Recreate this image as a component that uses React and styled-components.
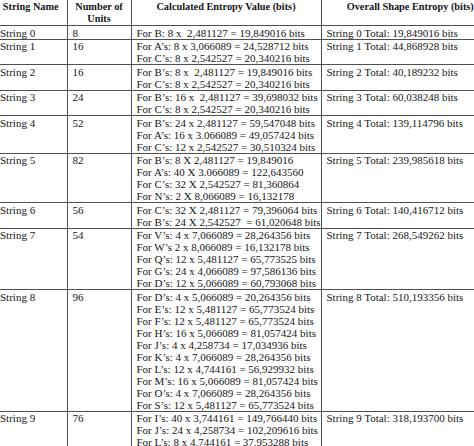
import React from 'react';
import styled, { createGlobalStyle } from 'styled-components';

//------------------------------------------------------------------------------
// DATA:
//------------------------------------------------------------------------------
const ROWS = [
  { name: 'String 0', units: '8', lines: ['For B: 8 x \u00a02,481127 = 19,849016 bits'], total: '19,849016' },
  {
    name: 'String 1',
    units: '16',
    lines: ['For A\u2019s: 8 x 3,066089 = 24,528712 bits', 'For C\u2019s: 8 x 2,542527 = 20,340216 bits'],
    total: '44,868928',
  },
  {
    name: 'String 2',
    units: '16',
    lines: ['For B\u2019s: 8 x \u00a02,481127 = 19,849016 bits', 'For C\u2019s: 8 x 2,542527 = 20,340216 bits'],
    total: '40,189232',
  },
  {
    name: 'String 3',
    units: '24',
    lines: ['For B\u2019s: 16 x \u00a02,481127 = 39,698032 bits', 'For C\u2019s: 8 x 2,542527 = 20,340216 bits'],
    total: '60,038248',
  },
  {
    name: 'String 4',
    units: '52',
    lines: [
      'For B\u2019s: 24 x 2,481127 = 59,547048 bits',
      'For A\u2019s: 16 x 3.066089 = 49,057424 bits',
      'For C\u2019s: 12 x 2,542527 = 30,510324 bits',
    ],
    total: '139,114796',
  },
  {
    name: 'String 5',
    units: '82',
    lines: [
      'For B\u2019s: 8 X 2,481127 = 19,849016',
      'For A\u2019s: 40 X 3.066089 = 122,643560',
      'For C\u2019s: 32 X 2,542527 = 81,360864',
      'For N\u2019s: 2 X 8,066089 = 16,132178',
    ],
    total: '239,985618',
  },
  {
    name: 'String 6',
    units: '56',
    lines: ['For C\u2019s: 32 X 2,481127 = 79,396064 bits', 'For B\u2019s: 24 X 2,542527 \u00a0= 61,020648 bits'],
    total: '140,416712',
  },
  {
    name: 'String 7',
    units: '54',
    lines: [
      'For V\u2019s: 4 x 7,066089 = 28,264356 bits',
      'For W\u2019s 2 x 8,066089 = 16,132178 bits',
      'For Q\u2019s: 12 x 5,481127 = 65,773525 bits',
      'For G\u2019s: 24 x 4,066089 = 97,586136 bits',
      'For D\u2019s: 12 x 5,066089 = 60,793068 bits',
    ],
    total: '268,549262',
  },
  {
    name: 'String 8',
    units: '96',
    lines: [
      'For D\u2019s: 4 x 5,066089 = 20,264356 bits',
      'For E\u2019s: 12 x 5,481127 = 65,773524 bits',
      'For F\u2019s: 12 x 5,481127 = 65,773524 bits',
      'For H\u2019s: 16 x 5,066089 = 81,057424 bits',
      'For J\u2019s: 4 x 4,258734 = 17,034936 bits',
      'For K\u2019s: 4 x 7,066089 = 28,264356 bits',
      'For L\u2019s: 12 x 4,744161 = 56,929932 bits',
      'For M\u2019s: 16 x 5,066089 = 81,057424 bits',
      'For O\u2019s: 4 x 7,066089 = 28,264356 bits',
      'For S\u2019s: 12 x 5,481127 = 65,773524 bits',
    ],
    total: '510,193356',
  },
  {
    name: 'String 9',
    units: '76',
    lines: [
      'For I\u2019s: 40 x 3,744161 = 149,766440 bits',
      'For J\u2019s: 24 x 4,258734 = 102,209616 bits',
      'For L\u2019s: 8 x 4,744161 = 37,953288 bits',
    ],
    total: '318,193700',
  },
];

//------------------------------------------------------------------------------
// STYLES:
//------------------------------------------------------------------------------
const GlobalStyle = createGlobalStyle`
  html, body {
    margin: 0;
    padding: 0;
    background: #ffffff;
    overflow: hidden;
  }
`;
//------------------------------------------------------------------------------
const Page = styled.div`
  width: 474px;
  height: 446px;
  overflow: hidden;
  background: #ffffff;
`;
//------------------------------------------------------------------------------
const Table = styled.table`
  margin-left: -5px;
  width: 504px;
  table-layout: fixed;
  border-collapse: collapse;
  font-family: "Liberation Serif", "Times New Roman", serif;
  color: #161616;
`;
//------------------------------------------------------------------------------
const HeadCell = styled.th`
  padding: 1px 4px 0;
  font-size: 10.3px;
  line-height: 12px;
  font-weight: 700;
  text-align: center;
  vertical-align: top;
  border-left: 1px solid #505050;
  border-bottom: 1px solid #505050;

  &:first-child {
    border-left: none;
  }
`;
//------------------------------------------------------------------------------
const Cell = styled.td`
  padding: 0.5px 5px 0;
  padding-left: ${({ $first }) => ($first ? '5px' : '5px')};
  font-size: 11px;
  line-height: 12px;
  text-align: left;
  vertical-align: top;
  white-space: nowrap;
  border-left: 1px solid #505050;
  border-bottom: 1px solid #505050;

  &:first-child {
    border-left: none;
  }
`;
//------------------------------------------------------------------------------
const Line = styled.div`
  white-space: pre;
`;
//------------------------------------------------------------------------------
// COMPONENT:
//------------------------------------------------------------------------------
const App = () => (
  <Page>
    <GlobalStyle />
    <Table>
      <colgroup>
        <col style={{ width: 72 }} />
        <col style={{ width: 64 }} />
        <col style={{ width: 190 }} />
        <col style={{ width: 178 }} />
      </colgroup>
      <thead>
        <tr>
          <HeadCell>String Name</HeadCell>
          <HeadCell>Number of Units</HeadCell>
          <HeadCell>Calculated Entropy Value (bits)</HeadCell>
          <HeadCell>Overall Shape Entropy (bits)</HeadCell>
        </tr>
      </thead>
      <tbody>
        {ROWS.map((row) => (
          <tr key={row.name}>
            <Cell $first>{row.name}</Cell>
            <Cell>{row.units}</Cell>
            <Cell>
              {row.lines.map((line) => (
                <Line key={line}>{line}</Line>
              ))}
            </Cell>
            <Cell>{`${row.name} Total: ${row.total} bits`}</Cell>
          </tr>
        ))}
      </tbody>
    </Table>
  </Page>
);

export default App;
